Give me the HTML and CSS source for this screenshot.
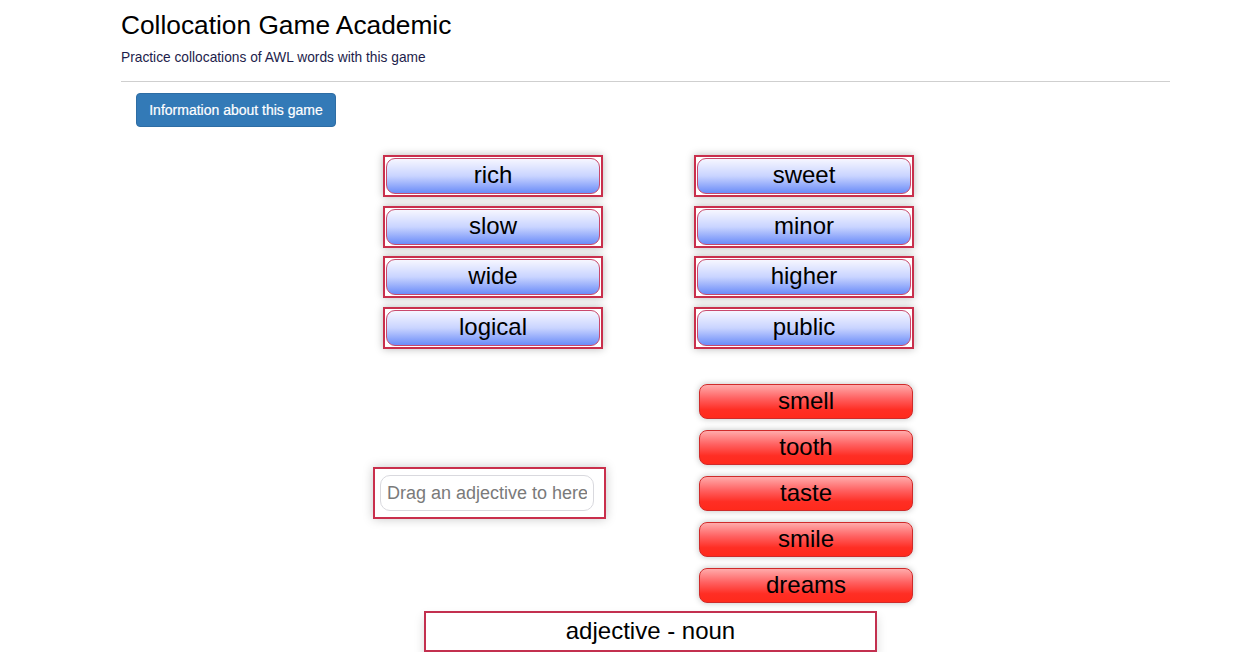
FILE: index.html
```html
<!DOCTYPE html>
<html lang="en">
<head>
<meta charset="utf-8">
<title>Collocation Game Academic</title>
<link rel="stylesheet" href="styles.css">
</head>
<body>
<div class="page">
  <h1 class="title">Collocation Game Academic</h1>
  <p class="subtitle">Practice collocations of AWL words with this game</p>
  <hr class="rule">
  <button class="info-btn" type="button">Information about this game</button>

  <div class="pairs">
    <div class="col">
      <div class="slot"><div class="word">rich</div></div>
      <div class="slot"><div class="word">slow</div></div>
      <div class="slot"><div class="word">wide</div></div>
      <div class="slot"><div class="word">logical</div></div>
    </div>
    <div class="col">
      <div class="slot"><div class="word">sweet</div></div>
      <div class="slot"><div class="word">minor</div></div>
      <div class="slot"><div class="word">higher</div></div>
      <div class="slot"><div class="word">public</div></div>
    </div>
  </div>

  <div class="lower">
    <div class="drop">
      <input class="drop-input" type="text" placeholder="Drag an adjective to here">
    </div>
    <div class="nouns">
      <div class="noun">smell</div>
      <div class="noun">tooth</div>
      <div class="noun">taste</div>
      <div class="noun">smile</div>
      <div class="noun">dreams</div>
    </div>
  </div>

  <div class="label-box">adjective - noun</div>
</div>
</body>
</html>
```

FILE: styles.css
```css
html, body {
  margin: 0;
  padding: 0;
  background: #ffffff;
}

body {
  font-family: "Liberation Sans", Arial, Helvetica, sans-serif;
  color: #000;
  overflow: hidden;
}

.page {
  margin-left: 121px;
  width: 1049px;
}

.title {
  margin: 10px 0 0;
  font-size: 26.3px;
  line-height: 30px;
  font-weight: 400;
  color: #000;
}

.subtitle {
  margin: 10px 0 0;
  font-size: 13.75px;
  line-height: 15px;
  color: #1d1d4b;
}

.rule {
  margin: 16px 0 0;
  border: 0;
  border-top: 1px solid #cfcfcf;
  height: 0;
}

.info-btn {
  display: block;
  margin: 11px 0 0 15px;
  width: 200px;
  height: 34px;
  padding: 0;
  border: 1px solid #2e6da4;
  border-radius: 4px;
  background: #337ab7;
  color: #fff;
  font-family: "Liberation Sans", Arial, sans-serif;
  font-size: 14px;
  line-height: 32px;
  text-align: center;
  -webkit-text-stroke: 0.2px #fff;
}

.pairs {
  margin: 28px 0 0 262px;
  display: grid;
  grid-template-columns: 220px 220px;
  column-gap: 91px;
}

.col {
  display: flex;
  flex-direction: column;
  gap: 8.5px;
}

.slot {
  box-sizing: border-box;
  width: 220px;
  height: 42px;
  border: 2px solid #c92f4c;
  padding: 1px;
  background: #fff;
  box-shadow: 0 0 8px rgba(0, 0, 0, 0.28);
}

.word {
  box-sizing: border-box;
  height: 36px;
  border: 1px solid #c9496c;
  border-radius: 9px;
  background: linear-gradient(to bottom, #f6f6ff 0%, #c9d4ff 50%, #6b8cf8 100%);
  font-size: 24px;
  line-height: 32px;
  text-align: center;
  color: #000;
}

.lower {
  margin: 35px 0 0 252px;
  display: flex;
  align-items: center;
  gap: 93px;
}

.drop {
  box-sizing: border-box;
  width: 233px;
  height: 52px;
  border: 2px solid #c92f4c;
  padding: 6px 10px 6px 5px;
  background: #fff;
  box-shadow: 0 0 10px rgba(0, 0, 0, 0.22);
}

.drop-input {
  box-sizing: border-box;
  display: block;
  width: 214px;
  height: 36px;
  margin: 0;
  padding: 0 6px;
  border: 1px solid #d9d9de;
  border-radius: 10px;
  background: #fff;
  font-family: "Liberation Sans", Arial, sans-serif;
  font-size: 18px;
  color: #333;
  outline: none;
}

.drop-input::placeholder {
  color: #7a7a7a;
}

.nouns {
  display: flex;
  flex-direction: column;
  gap: 11px;
}

.noun {
  box-sizing: border-box;
  width: 214px;
  height: 35px;
  border: 1px solid #cf2a2a;
  border-radius: 8px;
  background: linear-gradient(to bottom, #ffabab 0%, #ff6262 40%, #ff2e24 75%, #ff2a1c 100%);
  box-shadow: 0 0 6px rgba(0, 0, 0, 0.25);
  font-size: 24px;
  line-height: 31px;
  text-align: center;
  color: #000;
}

.label-box {
  box-sizing: border-box;
  margin: 8px 0 0 303px;
  width: 453px;
  height: 41px;
  border: 2px solid #c3304f;
  background: #fff;
  box-shadow: 0 6px 10px rgba(0, 0, 0, 0.15);
  font-size: 24px;
  line-height: 35px;
  text-align: center;
  color: #000;
}
```
